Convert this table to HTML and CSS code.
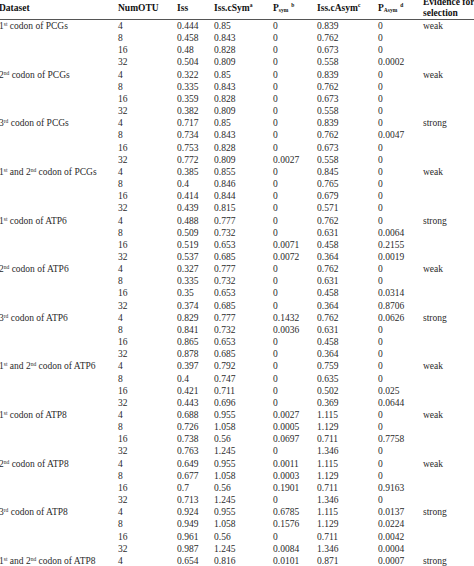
FILE: index.html
```html
<!DOCTYPE html>
<html>
<head>
<meta charset="utf-8">
<link rel="stylesheet" href="styles.css">
</head>
<body>
<table class="tbl">
<colgroup>
<col class="c1"><col class="c2"><col class="c3"><col class="c4"><col class="c5"><col class="c6"><col class="c7"><col class="c8">
</colgroup>
<thead>
<tr>
<th>Dataset</th><th>NumOTU</th><th>Iss</th><th>Iss.cSym<sup class="hs">a</sup></th><th>P<sub class="hb">sym</sub><sup class="hs hs2">b</sup></th><th>Iss.cAsym<sup class="hs">c</sup></th><th>P<sub class="hb">Asym</sub><sup class="hs hs2">d</sup></th><th>Evidence for<br>selection</th>
</tr>
</thead>
<tbody>
<tr><td>1<sup class="o">st</sup> codon of PCGs</td><td>4</td><td>0.444</td><td>0.85</td><td>0</td><td>0.839</td><td>0</td><td>weak</td></tr>
<tr><td></td><td>8</td><td>0.458</td><td>0.843</td><td>0</td><td>0.762</td><td>0</td><td></td></tr>
<tr><td></td><td>16</td><td>0.48</td><td>0.828</td><td>0</td><td>0.673</td><td>0</td><td></td></tr>
<tr><td></td><td>32</td><td>0.504</td><td>0.809</td><td>0</td><td>0.558</td><td>0.0002</td><td></td></tr>
<tr><td>2<sup class="o">nd</sup> codon of PCGs</td><td>4</td><td>0.322</td><td>0.85</td><td>0</td><td>0.839</td><td>0</td><td>weak</td></tr>
<tr><td></td><td>8</td><td>0.335</td><td>0.843</td><td>0</td><td>0.762</td><td>0</td><td></td></tr>
<tr><td></td><td>16</td><td>0.359</td><td>0.828</td><td>0</td><td>0.673</td><td>0</td><td></td></tr>
<tr><td></td><td>32</td><td>0.382</td><td>0.809</td><td>0</td><td>0.558</td><td>0</td><td></td></tr>
<tr><td>3<sup class="o">rd</sup> codon of PCGs</td><td>4</td><td>0.717</td><td>0.85</td><td>0</td><td>0.839</td><td>0</td><td>strong</td></tr>
<tr><td></td><td>8</td><td>0.734</td><td>0.843</td><td>0</td><td>0.762</td><td>0.0047</td><td></td></tr>
<tr><td></td><td>16</td><td>0.753</td><td>0.828</td><td>0</td><td>0.673</td><td>0</td><td></td></tr>
<tr><td></td><td>32</td><td>0.772</td><td>0.809</td><td>0.0027</td><td>0.558</td><td>0</td><td></td></tr>
<tr><td>1<sup class="o">st</sup> and 2<sup class="o">nd</sup> codon of PCGs</td><td>4</td><td>0.385</td><td>0.855</td><td>0</td><td>0.845</td><td>0</td><td>weak</td></tr>
<tr><td></td><td>8</td><td>0.4</td><td>0.846</td><td>0</td><td>0.765</td><td>0</td><td></td></tr>
<tr><td></td><td>16</td><td>0.414</td><td>0.844</td><td>0</td><td>0.679</td><td>0</td><td></td></tr>
<tr><td></td><td>32</td><td>0.439</td><td>0.815</td><td>0</td><td>0.571</td><td>0</td><td></td></tr>
<tr><td>1<sup class="o">st</sup> codon of ATP6</td><td>4</td><td>0.488</td><td>0.777</td><td>0</td><td>0.762</td><td>0</td><td>strong</td></tr>
<tr><td></td><td>8</td><td>0.509</td><td>0.732</td><td>0</td><td>0.631</td><td>0.0064</td><td></td></tr>
<tr><td></td><td>16</td><td>0.519</td><td>0.653</td><td>0.0071</td><td>0.458</td><td>0.2155</td><td></td></tr>
<tr><td></td><td>32</td><td>0.537</td><td>0.685</td><td>0.0072</td><td>0.364</td><td>0.0019</td><td></td></tr>
<tr><td>2<sup class="o">nd</sup> codon of ATP6</td><td>4</td><td>0.327</td><td>0.777</td><td>0</td><td>0.762</td><td>0</td><td>weak</td></tr>
<tr><td></td><td>8</td><td>0.335</td><td>0.732</td><td>0</td><td>0.631</td><td>0</td><td></td></tr>
<tr><td></td><td>16</td><td>0.35</td><td>0.653</td><td>0</td><td>0.458</td><td>0.0314</td><td></td></tr>
<tr><td></td><td>32</td><td>0.374</td><td>0.685</td><td>0</td><td>0.364</td><td>0.8706</td><td></td></tr>
<tr><td>3<sup class="o">rd</sup> codon of ATP6</td><td>4</td><td>0.829</td><td>0.777</td><td>0.1432</td><td>0.762</td><td>0.0626</td><td>strong</td></tr>
<tr><td></td><td>8</td><td>0.841</td><td>0.732</td><td>0.0036</td><td>0.631</td><td>0</td><td></td></tr>
<tr><td></td><td>16</td><td>0.865</td><td>0.653</td><td>0</td><td>0.458</td><td>0</td><td></td></tr>
<tr><td></td><td>32</td><td>0.878</td><td>0.685</td><td>0</td><td>0.364</td><td>0</td><td></td></tr>
<tr><td>1<sup class="o">st</sup> and 2<sup class="o">nd</sup> codon of ATP6</td><td>4</td><td>0.397</td><td>0.792</td><td>0</td><td>0.759</td><td>0</td><td>weak</td></tr>
<tr><td></td><td>8</td><td>0.4</td><td>0.747</td><td>0</td><td>0.635</td><td>0</td><td></td></tr>
<tr><td></td><td>16</td><td>0.421</td><td>0.711</td><td>0</td><td>0.502</td><td>0.025</td><td></td></tr>
<tr><td></td><td>32</td><td>0.443</td><td>0.696</td><td>0</td><td>0.369</td><td>0.0644</td><td></td></tr>
<tr><td>1<sup class="o">st</sup> codon of ATP8</td><td>4</td><td>0.688</td><td>0.955</td><td>0.0027</td><td>1.115</td><td>0</td><td>weak</td></tr>
<tr><td></td><td>8</td><td>0.726</td><td>1.058</td><td>0.0005</td><td>1.129</td><td>0</td><td></td></tr>
<tr><td></td><td>16</td><td>0.738</td><td>0.56</td><td>0.0697</td><td>0.711</td><td>0.7758</td><td></td></tr>
<tr><td></td><td>32</td><td>0.763</td><td>1.245</td><td>0</td><td>1.346</td><td>0</td><td></td></tr>
<tr><td>2<sup class="o">nd</sup> codon of ATP8</td><td>4</td><td>0.649</td><td>0.955</td><td>0.0011</td><td>1.115</td><td>0</td><td>weak</td></tr>
<tr><td></td><td>8</td><td>0.677</td><td>1.058</td><td>0.0003</td><td>1.129</td><td>0</td><td></td></tr>
<tr><td></td><td>16</td><td>0.7</td><td>0.56</td><td>0.1901</td><td>0.711</td><td>0.9163</td><td></td></tr>
<tr><td></td><td>32</td><td>0.713</td><td>1.245</td><td>0</td><td>1.346</td><td>0</td><td></td></tr>
<tr><td>3<sup class="o">rd</sup> codon of ATP8</td><td>4</td><td>0.924</td><td>0.955</td><td>0.6785</td><td>1.115</td><td>0.0137</td><td>strong</td></tr>
<tr><td></td><td>8</td><td>0.949</td><td>1.058</td><td>0.1576</td><td>1.129</td><td>0.0224</td><td></td></tr>
<tr><td></td><td>16</td><td>0.961</td><td>0.56</td><td>0</td><td>0.711</td><td>0.0042</td><td></td></tr>
<tr><td></td><td>32</td><td>0.987</td><td>1.245</td><td>0.0084</td><td>1.346</td><td>0.0004</td><td></td></tr>
<tr><td>1<sup class="o">st</sup> and 2<sup class="o">nd</sup> codon of ATP8</td><td>4</td><td>0.654</td><td>0.816</td><td>0.0101</td><td>0.871</td><td>0.0007</td><td>strong</td></tr>
</tbody>
</table>
</body>
</html>
```
FILE: styles.css
```css
html, body {
  margin: 0;
  padding: 0;
  background: #ffffff;
  overflow: hidden;
}
body {
  font-family: "Liberation Serif", "Times New Roman", serif;
  font-size: 9.5px;
  color: #2a2a2a;
}
.tbl {
  border-collapse: collapse;
  table-layout: fixed;
  width: 490px;
  margin-top: -3px;
  margin-left: -1px;
}
.c1 { width: 119px; }
.c2 { width: 59px; }
.c3 { width: 37px; }
.c4 { width: 59px; }
.c5 { width: 44px; }
.c6 { width: 61px; }
.c7 { width: 45px; }
.c8 { width: 66px; }
.tbl th {
  font-weight: bold;
  color: #111;
  text-align: left;
  vertical-align: middle;
  padding: 0;
  line-height: 11px;
  height: 22px;
  border-bottom: 1px solid #555;
  white-space: nowrap;
}
.tbl td {
  padding: 0;
  height: 12.16px;
  line-height: 12.16px;
  white-space: nowrap;
  vertical-align: middle;
}
.o {
  font-size: 5.5px;
  line-height: 0;
  vertical-align: 3.5px;
}
.hs {
  font-size: 5.5px;
  line-height: 0;
  vertical-align: 4px;
}
.hs2 {
  margin-left: 3px;
}
.hb {
  font-size: 5.5px;
  line-height: 0;
  vertical-align: -1px;
}
```
